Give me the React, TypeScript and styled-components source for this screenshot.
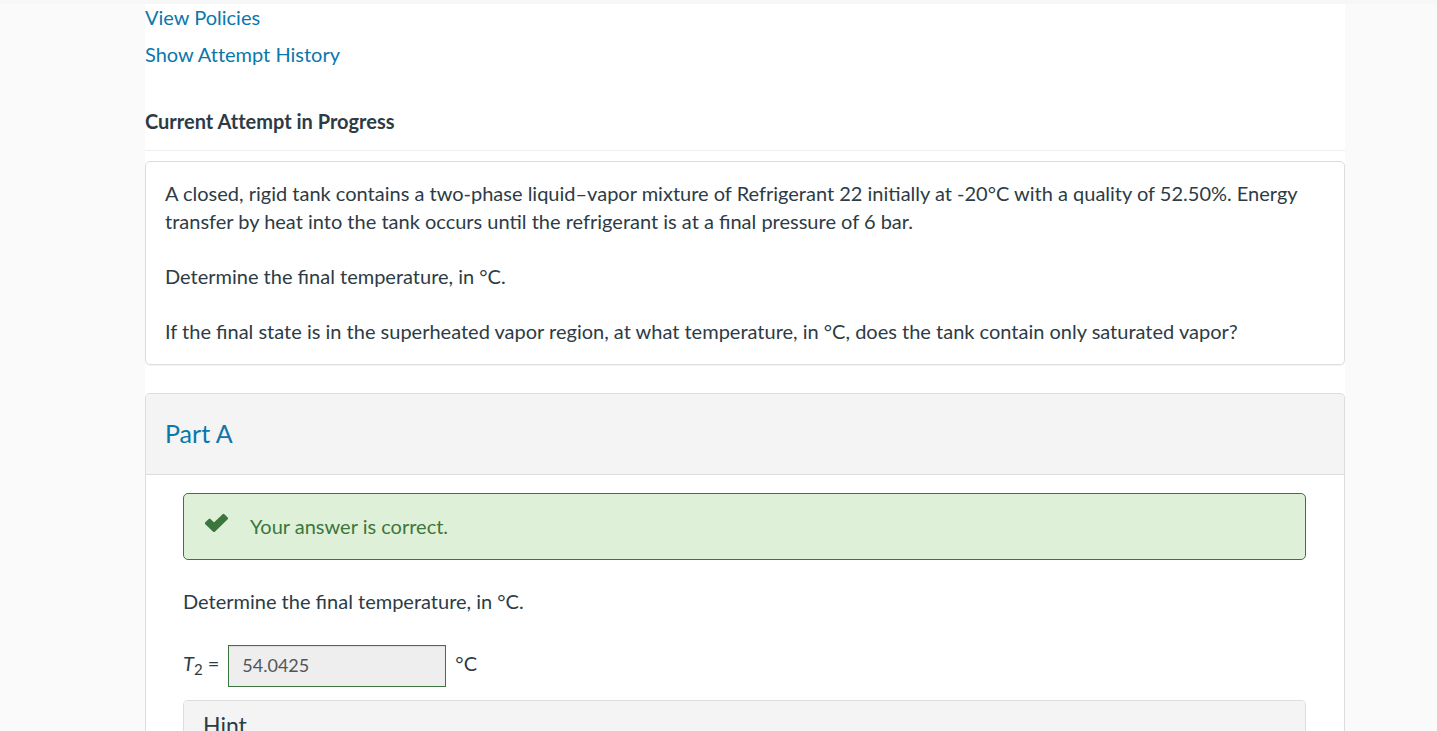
import React from "react";
import styled, { createGlobalStyle } from "styled-components";

const GlobalStyle = createGlobalStyle`
  *, *::before, *::after { box-sizing: border-box; }
  html, body { margin: 0; background: #fafafa; }
  html { overflow: hidden; }
  body {
    font-family: Lato, "Open Sans", sans-serif;
    font-size: 20px;
    line-height: 28px;
    color: #2d3b45;
  }
  p, h2, h3 { margin: 0; font-size: inherit; }
`;

const TopStrip = styled.header`
  height: 4px;
  background: #f7f7f7;
`;

const Content = styled.main`
  margin: 0 92px 0 145px;
  background: #fff;
`;

const LinkList = styled.nav`
  display: flex;
  flex-direction: column;
  align-items: flex-start;
  gap: 11px;
  line-height: 26px;
  font-variant-ligatures: none;
`;

const TextLink = styled.a`
  color: #0a77ab;
  text-decoration: none;
`;

const AttemptHeading = styled.h2`
  padding: 40px 0 15px;
  border-bottom: 1px solid #eee;
  font-weight: 700;
  font-variant-ligatures: none;
`;

const Problem = styled.section`
  display: flex;
  flex-direction: column;
  gap: 27px;
  margin: 10px 0 28px;
  padding: 17px 19px 19px;
  border: 1px solid #ddd;
  border-radius: 5px;
  box-shadow: 0 1px 1px rgba(0, 0, 0, 0.05);
`;

const Panel = styled.section`
  border: 1px solid #ddd;
  border-bottom: 0;
  border-radius: 5px 5px 0 0;
`;

const PanelHeader = styled.header<{ $pad: string }>`
  padding: ${(p) => p.$pad};
  background: #f4f4f4;
  border-bottom: 1px solid #ddd;
  border-radius: 4px 4px 0 0;
`;

const PanelTitle = styled.h3<{ $size: number }>`
  font-size: ${(p) => p.$size}px;
  font-weight: 400;
`;

const PanelBody = styled.div`
  padding: 18px 38px 0 37px;
`;

const Alert = styled.div`
  display: flex;
  align-items: center;
  gap: 21px;
  height: 67px;
  padding: 0 20px 2px;
  border: 1px solid #3c763d;
  border-radius: 5px;
  background: #dff0d8;
  color: #3c763d;

  svg { margin-bottom: 6px; }
`;

const Question = styled.p`
  margin: 27px 0 30px;
`;

const AnswerRow = styled.div`
  display: flex;
  align-items: center;
  gap: 9px;
  margin-bottom: 13px;
`;

const Variable = styled.label`
  padding-bottom: 6px;
  white-space: nowrap;

  sub {
    font-size: 15px;
    line-height: 0;
    vertical-align: -4px;
  }
`;

const Unit = styled.span`
  padding-bottom: 6px;
`;

const AnswerInput = styled.input`
  width: 218px;
  height: 42px;
  padding: 0 13px 2px;
  border: 1px solid #3c763d;
  border-radius: 0;
  background: #eee;
  box-shadow: inset 0 1px 1px rgba(0, 0, 0, 0.075);
  color: #555;
  font: inherit;
  font-size: 18px;
  opacity: 1;
`;

const Check = () => (
  <svg width="25" height="20" viewBox="0 0 25 20" aria-hidden="true">
    <path
      d="M2.2 10.2 L5.6 6.9 L10 11.2 L19.5 2.2 L22.8 5.4 L10 17.7 Z"
      fill="currentColor"
      stroke="currentColor"
      strokeWidth="2.6"
      strokeLinejoin="round"
    />
  </svg>
);

export default function App() {
  return (
    <>
      <GlobalStyle />
      <TopStrip />
      <Content>
        <LinkList>
          <TextLink href="#policies">View Policies</TextLink>
          <TextLink href="#history">Show Attempt History</TextLink>
        </LinkList>
        <AttemptHeading>Current Attempt in Progress</AttemptHeading>
        <Problem>
          <p>
            A closed, rigid tank contains a two-phase liquid–vapor mixture of Refrigerant 22 initially at -20°C with a
            quality of 52.50%. Energy transfer by heat into the tank occurs until the refrigerant is at a final
            pressure of 6 bar.
          </p>
          <p>Determine the final temperature, in °C.</p>
          <p>
            If the final state is in the superheated vapor region, at what temperature, in °C, does the tank contain
            only saturated vapor?
          </p>
        </Problem>
        <Panel>
          <PanelHeader $pad="25px 19px 27px">
            <PanelTitle $size={25}>
              <TextLink href="#part-a">Part A</TextLink>
            </PanelTitle>
          </PanelHeader>
          <PanelBody>
            <Alert role="status">
              <Check />
              <span>Your answer is correct.</span>
            </Alert>
            <Question>Determine the final temperature, in °C.</Question>
            <AnswerRow>
              <Variable htmlFor="t2">
                <i>T</i>
                <sub>2</sub> =
              </Variable>
              <AnswerInput id="t2" type="text" defaultValue="54.0425" disabled />
              <Unit>°C</Unit>
            </AnswerRow>
            <Panel>
              <PanelHeader $pad="10px 19px 12px">
                <PanelTitle $size={23}>Hint</PanelTitle>
              </PanelHeader>
            </Panel>
          </PanelBody>
        </Panel>
      </Content>
    </>
  );
}
